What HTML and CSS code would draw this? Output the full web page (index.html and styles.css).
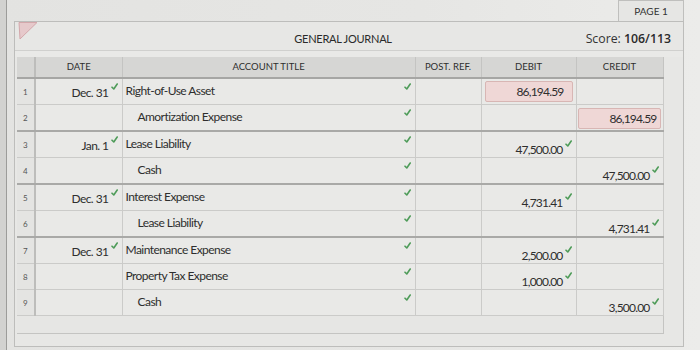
FILE: index.html
```html
<!DOCTYPE html>
<html>
<head>
<meta charset="utf-8">
<link rel="stylesheet" href="styles.css">
</head>
<body>
<div class="screen">
  <div class="edge"></div>
  <div class="main">
    <div class="tabs"><div class="tab">PAGE 1</div></div>
    <div class="panel">
      <div class="panel-head">
        <svg class="flag" width="20" height="18" viewBox="0 0 20 18"><polygon points="1,0.5 19,0.5 2,17" fill="#e6c9cb" stroke="#d3a7ab" stroke-width="1"/></svg>
        <div class="title">GENERAL JOURNAL</div>
        <div class="score">Score: <b>106/113</b></div>
      </div>
      <div class="band"></div>
      <table class="journal">
        <colgroup>
          <col class="c-num"><col class="c-date"><col class="c-title"><col class="c-ref"><col class="c-amt"><col class="c-cr">
        </colgroup>
        <thead>
          <tr><th></th><th>DATE</th><th>ACCOUNT TITLE</th><th>POST. REF.</th><th>DEBIT</th><th>CREDIT</th></tr>
        </thead>
        <tbody>
          <tr>
            <td class="num">1</td>
            <td class="date">Dec. 31<svg class="chk" viewBox="0 0 7 7"><path d="M1 4.2 L2.8 6 L6.2 1"/></svg></td>
            <td class="acct"><div class="acct-in"><span>Right-of-Use Asset</span><svg class="chk" viewBox="0 0 7 7"><path d="M1 4.2 L2.8 6 L6.2 1"/></svg></div></td>
            <td></td>
            <td class="amt"><div class="wrong">86,194.59</div></td>
            <td class="amt"></td>
          </tr>
          <tr class="end">
            <td class="num">2</td>
            <td class="date"></td>
            <td class="acct"><div class="acct-in cr"><span>Amortization Expense</span><svg class="chk" viewBox="0 0 7 7"><path d="M1 4.2 L2.8 6 L6.2 1"/></svg></div></td>
            <td></td>
            <td class="amt"></td>
            <td class="amt"><div class="wrong cr-box">86,194.59</div></td>
          </tr>
          <tr>
            <td class="num">3</td>
            <td class="date">Jan. 1<svg class="chk" viewBox="0 0 7 7"><path d="M1 4.2 L2.8 6 L6.2 1"/></svg></td>
            <td class="acct"><div class="acct-in"><span>Lease Liability</span><svg class="chk" viewBox="0 0 7 7"><path d="M1 4.2 L2.8 6 L6.2 1"/></svg></div></td>
            <td></td>
            <td class="amt"><div class="val">47,500.00<svg class="chk" viewBox="0 0 7 7"><path d="M1 4.2 L2.8 6 L6.2 1"/></svg></div></td>
            <td class="amt"></td>
          </tr>
          <tr class="end">
            <td class="num">4</td>
            <td class="date"></td>
            <td class="acct"><div class="acct-in cr"><span>Cash</span><svg class="chk" viewBox="0 0 7 7"><path d="M1 4.2 L2.8 6 L6.2 1"/></svg></div></td>
            <td></td>
            <td class="amt"></td>
            <td class="amt"><div class="val">47,500.00<svg class="chk" viewBox="0 0 7 7"><path d="M1 4.2 L2.8 6 L6.2 1"/></svg></div></td>
          </tr>
          <tr>
            <td class="num">5</td>
            <td class="date">Dec. 31<svg class="chk" viewBox="0 0 7 7"><path d="M1 4.2 L2.8 6 L6.2 1"/></svg></td>
            <td class="acct"><div class="acct-in"><span>Interest Expense</span><svg class="chk" viewBox="0 0 7 7"><path d="M1 4.2 L2.8 6 L6.2 1"/></svg></div></td>
            <td></td>
            <td class="amt"><div class="val">4,731.41<svg class="chk" viewBox="0 0 7 7"><path d="M1 4.2 L2.8 6 L6.2 1"/></svg></div></td>
            <td class="amt"></td>
          </tr>
          <tr class="end">
            <td class="num">6</td>
            <td class="date"></td>
            <td class="acct"><div class="acct-in cr"><span>Lease Liability</span><svg class="chk" viewBox="0 0 7 7"><path d="M1 4.2 L2.8 6 L6.2 1"/></svg></div></td>
            <td></td>
            <td class="amt"></td>
            <td class="amt"><div class="val">4,731.41<svg class="chk" viewBox="0 0 7 7"><path d="M1 4.2 L2.8 6 L6.2 1"/></svg></div></td>
          </tr>
          <tr>
            <td class="num">7</td>
            <td class="date">Dec. 31<svg class="chk" viewBox="0 0 7 7"><path d="M1 4.2 L2.8 6 L6.2 1"/></svg></td>
            <td class="acct"><div class="acct-in"><span>Maintenance Expense</span><svg class="chk" viewBox="0 0 7 7"><path d="M1 4.2 L2.8 6 L6.2 1"/></svg></div></td>
            <td></td>
            <td class="amt"><div class="val">2,500.00<svg class="chk" viewBox="0 0 7 7"><path d="M1 4.2 L2.8 6 L6.2 1"/></svg></div></td>
            <td class="amt"></td>
          </tr>
          <tr>
            <td class="num">8</td>
            <td class="date"></td>
            <td class="acct"><div class="acct-in"><span>Property Tax Expense</span><svg class="chk" viewBox="0 0 7 7"><path d="M1 4.2 L2.8 6 L6.2 1"/></svg></div></td>
            <td></td>
            <td class="amt"><div class="val">1,000.00<svg class="chk" viewBox="0 0 7 7"><path d="M1 4.2 L2.8 6 L6.2 1"/></svg></div></td>
            <td class="amt"></td>
          </tr>
          <tr>
            <td class="num">9</td>
            <td class="date"></td>
            <td class="acct"><div class="acct-in cr"><span>Cash</span><svg class="chk" viewBox="0 0 7 7"><path d="M1 4.2 L2.8 6 L6.2 1"/></svg></div></td>
            <td></td>
            <td class="amt"></td>
            <td class="amt"><div class="val">3,500.00<svg class="chk" viewBox="0 0 7 7"><path d="M1 4.2 L2.8 6 L6.2 1"/></svg></div></td>
          </tr>
        </tbody>
        <tfoot>
          <tr><td colspan="6"></td></tr>
        </tfoot>
      </table>
    </div>
  </div>
</div>
</body>
</html>
```
FILE: styles.css
```css
* { box-sizing: border-box; }
html, body {
  margin: 0;
  width: 700px;
  height: 350px;
  overflow: hidden;
  background: #e7e7e5;
  font-family: Lato, "Liberation Sans", sans-serif;
  color: #2e2e2e;
}
.screen {
  display: flex;
  height: 350px;
  background: linear-gradient(90deg, #e3e3e1 0%, #e6e6e4 60%, #ececea 100%);
}
.edge {
  width: 7px;
  flex: none;
  background: #d2d2d0;
  border-right: 1px solid #9c9c9a;
}
.main {
  padding-left: 7px;
  width: 677px;
  flex: none;
}
.tabs {
  height: 21px;
  display: flex;
  justify-content: flex-end;
}
.tab {
  width: 66px;
  height: 21px;
  border: 1px solid #bfbfbd;
  border-bottom: none;
  background: #e6e6e4;
  font-size: 10px;
  text-align: center;
  line-height: 21px;
  color: #333;
  position: relative;
  z-index: 1;
  margin-bottom: -1px;
}
.panel {
  border: 1px solid #bdbdbb;
  background: #e7e7e5;
  height: 326px;
  padding: 0 13px 0 2px;
}
.panel-head {
  height: 28px;
  display: grid;
  grid-template-columns: 1fr auto 1fr;
  align-items: start;
  margin-left: -2px;
  margin-right: -1px;
}
.flag { display: block; margin-left: 3px; }
.title {
  padding-top: 10px;
  font-size: 11px;
  letter-spacing: -0.25px;
  line-height: 14px;
  color: #2a2a2a;
}
.score {
  justify-self: end;
  padding-top: 10px;
  font-family: "Open Sans", sans-serif;
  font-size: 12.3px;
  line-height: 14px;
  color: #333;
}
.score b { color: #2a2a2a; font-weight: 600; }
.band {
  height: 7px;
  border-top: 1px solid #d0d0ce;
  background: #e9e9e7;
  margin-left: -2px;
  margin-right: -13px;
}
.journal {
  border-collapse: collapse;
  table-layout: fixed;
  width: 646px;
}
.c-num { width: 18px; }
.c-date { width: 87px; }
.c-title { width: 293px; }
.c-ref { width: 66px; }
.c-amt { width: 95px; }
.c-cr { width: 87px; }
.journal th {
  height: 21px;
  background: #d6d6d4;
  font-weight: normal;
  font-size: 9.5px;
  color: #2e2e2e;
  border-bottom: 2px solid #a6a6a4;
  border-right: 1px solid #c4c4c2;
  padding: 0 0 5px;
  vertical-align: bottom;
}
.journal th:first-child { border-right: 2px solid #bdbdbb; }
.journal td {
  height: 26px;
  padding: 0;
  background: #e9e9e7;
  border-bottom: 1px solid #cbcbc9;
  border-right: 1px solid #cbcbc9;
  font-size: 12px;
  letter-spacing: -0.55px;
  vertical-align: middle;
}
.journal tr.end td { border-bottom: 2px solid #a9a9a7; }
.journal td.num {
  font-size: 8px;
  color: #555;
  padding-left: 6px;
  border-right: 2px solid #bdbdbb;
  background: #e4e4e2;
  letter-spacing: 0;
}
.journal td.date {
  text-align: right;
  vertical-align: top;
  padding: 4px 4px 0 0;
  white-space: nowrap;
}
.chk {
  width: 7px;
  height: 7px;
  vertical-align: 7px;
  margin-left: 2px;
}
.chk path {
  fill: none;
  stroke: #4f9c5a;
  stroke-width: 1.6;
  stroke-linecap: round;
  stroke-linejoin: round;
}
.acct-in {
  display: flex;
  justify-content: space-between;
  align-items: flex-start;
  padding: 0 4px 0 3px;
  height: 25px;
}
.acct-in span { padding-top: 4px; }
.acct-in.cr span { padding-left: 12px; }
.acct-in .chk { margin-top: 4px; }
.journal td.amt {
  text-align: right;
  vertical-align: top;
  letter-spacing: -0.8px;
}
.val {
  padding: 8px 4px 0 0;
  white-space: nowrap;
}
.wrong {
  margin: 2px 3px 2px 3px;
  height: 21px;
  background: #efd7d6;
  border: 1px solid #d8b6b4;
  border-radius: 2px;
  padding: 2px 8px 0 0;
}
.wrong.cr-box {
  margin: 3px 2px 1px 1px;
  padding-right: 3px;
}
.journal tfoot td {
  height: 18px;
  background: #e6e6e4;
  border-bottom: 1px solid #c4c4c2;
  border-right: 1px solid #c4c4c2;
}
```
